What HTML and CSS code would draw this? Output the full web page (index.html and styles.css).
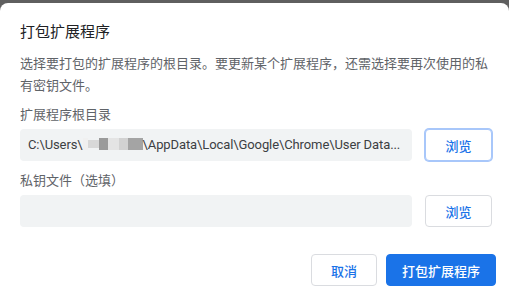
FILE: index.html
```html
<!DOCTYPE html>
<html lang="zh-CN">
  <head>
    <meta charset="UTF-8">
    <meta name="viewport" content="width=device-width, initial-scale=1.0">
    <title>打包扩展程序</title>
    <link rel="stylesheet" href="styles.css">
  </head>
  <body>
    <div class="backdrop"></div>
    <div class="dialog">
      <h2 class="title">打包扩展程序</h2>
      <p class="desc">选择要打包的扩展程序的根目录。要更新某个扩展程序，还需选择要再次使用的私有密钥文件。</p>

      <div class="label">扩展程序根目录</div>
      <div class="row">
        <div class="field">C:\Users\<span class="blur"><i class="b1"></i><i class="b2"></i><i class="b3"></i><i class="b4"></i><i class="b5"></i><i class="b6"></i></span>\AppData\Local\Google\Chrome\User Data...</div>
        <button class="browse focused">浏览</button>
      </div>

      <div class="label">私钥文件（选填）</div>
      <div class="row">
        <div class="field"></div>
        <button class="browse">浏览</button>
      </div>

      <div class="footer">
        <button class="cancel">取消</button>
        <button class="action">打包扩展程序</button>
      </div>
    </div>
  </body>
</html>
```

FILE: styles.css
```css
body {
    margin: 0;
    padding: 0;
    background-color: #5f5f5f;
    font-family: Roboto, "Noto Sans CJK SC", sans-serif;
    overflow: hidden;
  }

  .backdrop {
    height: 3px;
    background-color: #5f5f5f;
  }

  .dialog {
    box-sizing: border-box;
    height: calc(100vh - 3px);
    background-color: #fff;
    border-radius: 8px 8px 0 0;
    padding: 19px 13px 0 20px;
  }

  .title {
    margin: 0;
    font-size: 15px;
    line-height: 20px;
    font-weight: 400;
    color: #202124;
  }

  .desc {
    margin: 11px 0 0 0;
    padding-right: 4px;
    font-size: 13px;
    line-height: 22px;
    color: #5f6368;
  }

  .label {
    margin-top: 9px;
    font-size: 13px;
    line-height: 18px;
    color: #5f6368;
  }

  .label + .row {
    margin-top: 5px;
  }

  .row + .label {
    margin-top: 11px;
  }

  .row {
    display: flex;
    align-items: center;
    gap: 13px;
    padding-right: 4px;
  }

  .field {
    flex: 1;
    min-width: 0;
    height: 32px;
    box-sizing: border-box;
    padding: 0 8px;
    border-radius: 4px;
    background-color: #f1f3f4;
    font-size: 13px;
    letter-spacing: -0.1px;
    line-height: 32px;
    color: #3c4043;
    white-space: nowrap;
    overflow: hidden;
  }

  .blur {
    display: inline-flex;
    align-items: center;
    vertical-align: middle;
    height: 12px;
    width: 60px;
    margin-top: -3px;
  }

  .blur i {
    display: block;
    height: 100%;
  }

  .b1 { width: 5px; background-color: #f0f0f0; }
  .b2 { width: 11px; background-color: #d8d8d8; height: 8px !important; }
  .b3 { width: 9px; background-color: #9a9a9a; }
  .b4 { width: 11px; background-color: #e4e4e4; }
  .b5 { width: 9px; background-color: #d2d2d2; }
  .b6 { width: 15px; background-color: #a4a4a4; }

  button {
    font-family: Roboto, "Noto Sans CJK SC", sans-serif;
    font-size: 13px;
    font-weight: 500;
    height: 32px;
    border-radius: 4px;
    cursor: pointer;
  }

  .browse {
    width: 67px;
    flex: none;
    background-color: #fff;
    border: 1px solid #dadce0;
    color: #1a73e8;
  }

  .focused {
    border-color: #a8c7fa;
    box-shadow: 0 0 0 1px #a8c7fa;
  }

  .footer {
    display: flex;
    justify-content: flex-end;
    gap: 9px;
    margin-top: 27px;
  }

  .cancel {
    width: 66px;
    background-color: #fff;
    border: 1px solid #dadce0;
    color: #1a73e8;
  }

  .action {
    width: 110px;
    background-color: #1a73e8;
    border: 1px solid #1a73e8;
    color: #fff;
  }
```
